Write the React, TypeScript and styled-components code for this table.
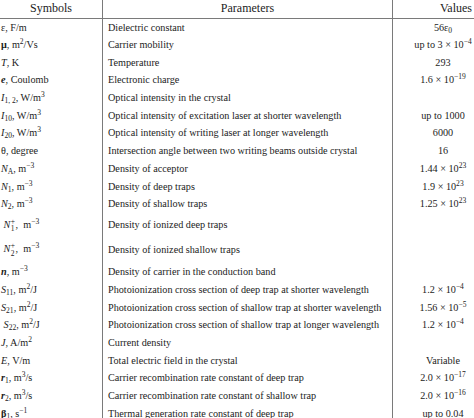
import React from 'react';
import styled, { createGlobalStyle } from 'styled-components';

const GlobalStyle = createGlobalStyle`
    html, body {
        margin: 0;
        padding: 0;
        background: #ffffff;
    }
    body {
        font-family: "Liberation Serif", "Times New Roman", serif;
        color: #1c1c1c;
    }
`;

const Frame = styled.div`
    width: 474px;
    height: 418px;
    overflow: hidden;
    background: #ffffff;
`;

const Table = styled.table`
    width: 517px;
    border-collapse: collapse;
    table-layout: fixed;
    font-size: 10.2px;
`;

const HeadCell = styled.th<{ $w: number; $last?: boolean }>`
    width: ${(p) => p.$w}px;
    height: 15px;
    padding: 0 0 3px 0;
    font-size: 12px;
    font-weight: normal;
    line-height: 12px;
    text-align: center;
    border-bottom: 1.5px solid #7a7a7a;
    border-right: ${(p) => (p.$last ? 'none' : '1.5px solid #7a7a7a')};
`;

const Row = styled.tr<{ $h?: number }>`
    height: ${(p) => p.$h ?? 17.7}px;
`;

const SymbolCell = styled.td`
    padding: 0 0 0 1px;
    white-space: nowrap;
    border-right: 1.5px solid #7a7a7a;
    line-height: 12px;
`;

const ParamCell = styled.td`
    padding: 0 0 0 5px;
    white-space: nowrap;
    border-right: 1.5px solid #7a7a7a;
    line-height: 12px;
`;

const ValueCell = styled.td`
    padding: 0 26px 0 0;
    white-space: nowrap;
    text-align: center;
    line-height: 12px;
`;

const It = styled.i``;

const BoldIt = styled.b`
    font-style: italic;
`;

const Bold = styled.b``;

const Sup = styled.sup`
    font-size: 0.74em;
    line-height: 0;
    vertical-align: 0.5em;
`;

const Sub = styled.sub`
    font-size: 0.74em;
    line-height: 0;
    vertical-align: -0.28em;
`;

// superscript + stacked above a subscript index
const Stack = styled.span`
    display: inline-block;
    vertical-align: -4px;
    font-size: 7.5px;
    line-height: 7.5px;
    margin: 0 0.5px 0 0.5px;
    & > span {
        display: block;
    }
`;

type Item = {
    sym: React.ReactNode;
    param: string;
    value?: React.ReactNode;
    h?: number;
};

const pow = (base: string, exp: string) => (
    <>
        {base} × 10<Sup>{exp}</Sup>
    </>
);

const rows: Item[] = [
    { sym: <>ε, F/m</>, param: 'Dielectric constant', value: <>56ε<Sub>0</Sub></> },
    { sym: <><Bold>μ</Bold>, m<Sup>2</Sup>/Vs</>, param: 'Carrier mobility', value: <>up to 3 × 10<Sup>−4</Sup></> },
    { sym: <><It>T</It>, K</>, param: 'Temperature', value: '293' },
    { sym: <><BoldIt>e</BoldIt>, Coulomb</>, param: 'Electronic charge', value: pow('1.6', '−19') },
    { sym: <><It>I</It><Sub>1, 2</Sub>, W/m<Sup>3</Sup></>, param: 'Optical intensity in the crystal' },
    { sym: <><It>I</It><Sub>10</Sub>, W/m<Sup>3</Sup></>, param: 'Optical intensity of excitation laser at shorter wavelength', value: 'up to 1000' },
    { sym: <><It>I</It><Sub>20</Sub>, W/m<Sup>3</Sup></>, param: 'Optical intensity of writing laser at longer wavelength', value: '6000' },
    { sym: <>θ, degree</>, param: 'Intersection angle between two writing beams outside crystal', value: '16' },
    { sym: <><It>N</It><Sub>A</Sub>, m<Sup>−3</Sup></>, param: 'Density of acceptor', value: pow('1.44', '23') },
    { sym: <><It>N</It><Sub>1</Sub>, m<Sup>−3</Sup></>, param: 'Density of deep traps', value: pow('1.9', '23') },
    { sym: <><It>N</It><Sub>2</Sub>, m<Sup>−3</Sup></>, param: 'Density of shallow traps', value: pow('1.25', '23') },
    {
        sym: <>&nbsp;<It>N</It><Stack><span>+</span><span>1</span></Stack>,&nbsp; m<Sup>−3</Sup></>,
        param: 'Density of ionized deep traps',
        h: 24,
    },
    {
        sym: <>&nbsp;<It>N</It><Stack><span>+</span><span>2</span></Stack>,&nbsp; m<Sup>−3</Sup></>,
        param: 'Density of ionized shallow traps',
        h: 25,
    },
    { sym: <><BoldIt>n</BoldIt>, m<Sup>−3</Sup></>, param: 'Density of carrier in the conduction band', h: 19 },
    { sym: <><It>S</It><Sub>11</Sub>, m<Sup>2</Sup>/J</>, param: 'Photoionization cross section of deep trap at shorter wavelength', value: pow('1.2', '−4') },
    { sym: <><It>S</It><Sub>21</Sub>, m<Sup>2</Sup>/J</>, param: 'Photoionization cross section of shallow trap at shorter wavelength', value: pow('1.56', '−5') },
    { sym: <>&nbsp;<It>S</It><Sub>22</Sub>, m<Sup>2</Sup>/J</>, param: 'Photoionization cross section of shallow trap at longer wavelength', value: pow('1.2', '−4') },
    { sym: <><It>J</It>, A/m<Sup>2</Sup></>, param: 'Current density' },
    { sym: <><It>E</It>, V/m</>, param: 'Total electric field in the crystal', value: 'Variable' },
    { sym: <><BoldIt>r</BoldIt><Sub>1</Sub>, m<Sup>3</Sup>/s</>, param: 'Carrier recombination rate constant of deep trap', value: pow('2.0', '−17') },
    { sym: <><BoldIt>r</BoldIt><Sub>2</Sub>, m<Sup>3</Sup>/s</>, param: 'Carrier recombination rate constant of shallow trap', value: pow('2.0', '−16') },
    { sym: <><Bold>β</Bold><Sub>1</Sub>, s<Sup>−1</Sup></>, param: 'Thermal generation rate constant of deep trap', value: 'up to 0.04' },
];

const App = () => {
    return (
        <>
            <GlobalStyle />
            <Frame>
                <Table>
                    <thead>
                        <tr>
                            <HeadCell $w={102}>Symbols</HeadCell>
                            <HeadCell $w={289}>Parameters</HeadCell>
                            <HeadCell $w={126} $last>Values</HeadCell>
                        </tr>
                    </thead>
                    <tbody>
                        {rows.map((r, i) => (
                            <Row key={i} $h={r.h}>
                                <SymbolCell>{r.sym}</SymbolCell>
                                <ParamCell>{r.param}</ParamCell>
                                <ValueCell>{r.value}</ValueCell>
                            </Row>
                        ))}
                    </tbody>
                </Table>
            </Frame>
        </>
    );
};

export default App;
